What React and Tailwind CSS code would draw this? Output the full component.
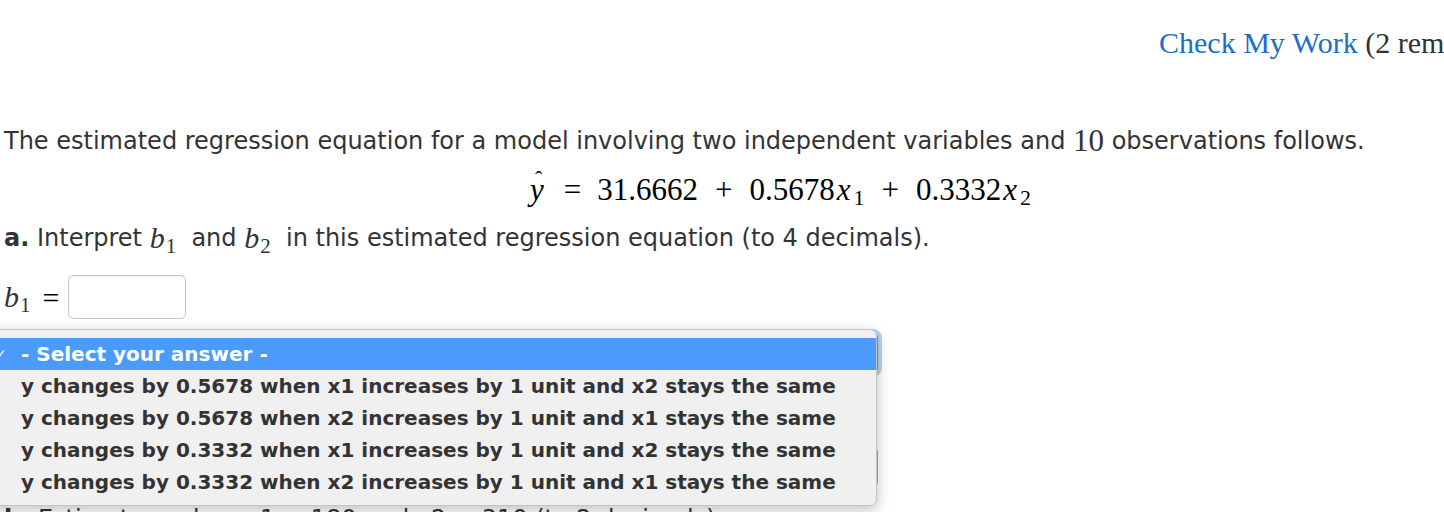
/* Regression question page with open select popup */

const serif = "font-['Liberation_Serif',serif]";
const sans = "font-['DejaVu_Sans',Verdana,sans-serif]";

function B({ n }) {
  return (
    <span className={`${serif} text-[30px] leading-none`}>
      <span className="italic">b</span>
      <span className="relative top-[5px] text-[21px] not-italic pl-[1px]">{n}</span>
    </span>
  );
}

function X({ n }) {
  return (
    <span>
      <span className="italic ml-[2px]">x</span>
      <span className="relative top-[5px] text-[22px] pl-[3px]">{n}</span>
    </span>
  );
}

const options = [
  "y changes by 0.5678 when x1 increases by 1 unit and x2 stays the same",
  "y changes by 0.5678 when x2 increases by 1 unit and x1 stays the same",
  "y changes by 0.3332 when x1 increases by 1 unit and x2 stays the same",
  "y changes by 0.3332 when x2 increases by 1 unit and x1 stays the same",
];

export default function App() {
  return (
    <div className={`relative w-[1444px] h-[512px] overflow-hidden bg-white text-[#333] ${sans}`}>
      {/* Header */}
      <div className="h-[84px] flex items-center pl-[1159px] whitespace-nowrap">
        <span className={`${serif} text-[30px]`}>
          <span className="text-[#1b6fc4]">Check My Work</span> (2 remaining)
        </span>
      </div>

      {/* Question */}
      <div className="mt-[42px] h-[30px] flex items-center pl-[4px] text-[24px] whitespace-nowrap">
        The estimated regression equation for a model involving two independent variables and&nbsp;
        <span className={`${serif} text-[31px]`}>10</span>&nbsp;observations follows.
      </div>

      <div className={`mt-[19px] h-[30px] flex items-center pl-[530px] whitespace-nowrap ${serif} text-[31px] text-black`}>
        <span className="relative italic">
          y<span className="absolute left-[5px] -top-[5px] not-italic text-[22px]">ˆ</span>
        </span>
        <span className="ml-[20px] mr-[16px]">=</span>
        <span>31.6662</span>
        <span className="mx-[17px]">+</span>
        <span>
          0.5678<X n={1} />
        </span>
        <span className="mx-[17px]">+</span>
        <span>
          0.3332<X n={2} />
        </span>
      </div>

      <div className="mt-[18px] h-[30px] flex items-center pl-[4px] text-[24px] whitespace-nowrap">
        <span className="font-bold">a.</span>&nbsp;Interpret&nbsp;<B n={1} />&nbsp;&nbsp;and&nbsp;<B n={2} />&nbsp;&nbsp;in this estimated regression equation (to 4 decimals).
      </div>

      {/* b1 row */}
      <div className="mt-[22px] h-[44px] flex items-center pl-[4px]">
        <B n={1} />
        <span className={`${serif} text-[30px] ml-[12px] mr-[9px] text-black`}>=</span>
        <div className="w-[118px] h-[44px] rounded-[5px] border border-[#c9c9c9] shadow-[inset_0_1px_2px_rgba(0,0,0,0.08)] bg-white" />
      </div>

      {/* select behind popup */}
      <div className="mt-[14px] w-[878px] h-[40px] rounded-[5px] border border-[#5b9ad6] shadow-[0_0_0_4px_rgba(90,160,230,0.45)] bg-[#f7f7f7]" />

      {/* b2 row */}
      <div className="mt-[17px] h-[44px] flex items-center pl-[4px]">
        <B n={2} />
        <span className={`${serif} text-[30px] ml-[12px] mr-[9px] text-black`}>=</span>
        <div className="w-[118px] h-[44px] rounded-[5px] border border-[#c9c9c9] bg-white" />
      </div>

      <div className="mt-[13px] w-[878px] h-[40px] rounded-[5px] border border-[#a8a8a8] bg-[#f7f7f7]" />

      <div className="mt-[14px] pl-[4px] text-[24px] whitespace-nowrap">
        <span className="font-bold">b.</span> Estimate y when x1 = 180 and x2 = 310 (to 2 decimals).
      </div>

      {/* Open select popup */}
      <div className="absolute left-[-10px] top-[329px] w-[887px] h-[177px] rounded-[7px] border border-[#c4c4c4] bg-[#f0f0f0] shadow-[0_4px_14px_rgba(0,0,0,0.25)] pt-[8px] font-bold text-[20px]">
        <div className="relative h-[32px] flex items-center pl-[30px] bg-[#4a9bfb] text-white">
          <span className="absolute left-[4px] text-[14px]">✓</span>- Select your answer -
        </div>
        {options.map((o) => (
          <div key={o} className="h-[32px] flex items-center pl-[30px] text-[#333] whitespace-nowrap">
            {o}
          </div>
        ))}
      </div>
    </div>
  );
}
